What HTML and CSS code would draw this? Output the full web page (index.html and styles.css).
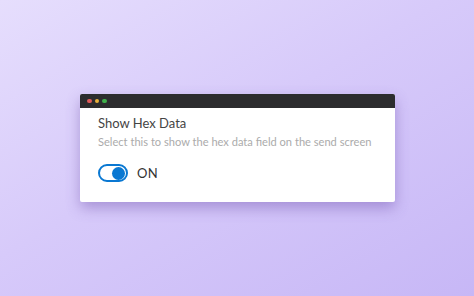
FILE: index.html
```html
<!DOCTYPE html>
<html>
<head>
<meta charset="utf-8">
<link rel="stylesheet" href="styles.css">
</head>
<body>
<div class="stage">
  <div class="window">
    <div class="titlebar">
      <span class="dot red"></span>
      <span class="dot yellow"></span>
      <span class="dot green"></span>
    </div>
    <div class="content">
      <div class="title">Show Hex Data</div>
      <div class="desc">Select this to show the hex data field on the send screen</div>
      <div class="toggle-row">
        <div class="toggle"><span class="knob"></span></div>
        <span class="state">ON</span>
      </div>
    </div>
  </div>
</div>
</body>
</html>
```
FILE: styles.css
```css
html, body {
  margin: 0;
  padding: 0;
  width: 474px;
  height: 296px;
  overflow: hidden;
}
.stage {
  width: 474px;
  height: 296px;
  background: linear-gradient(150deg, #e6defd 0%, #d7cafa 45%, #c7b7f6 100%);
  padding-top: 94px;
  padding-left: 80px;
  box-sizing: border-box;
  font-family: Lato, "Noto Sans", sans-serif;
}
.window {
  width: 315px;
  height: 108px;
  background: #fff;
  border-radius: 2px;
  overflow: hidden;
  box-shadow: 0 6px 14px rgba(110, 80, 170, 0.45);
}
.titlebar {
  height: 14px;
  background: #2c2c2e;
  display: flex;
  align-items: center;
  padding-left: 7px;
  gap: 3px;
}
.dot {
  width: 4.5px;
  height: 4.5px;
  border-radius: 50%;
}
.red { background: #e05a5a; }
.yellow { background: #e9b23b; }
.green { background: #3fb04a; }
.content {
  padding-left: 18px;
  padding-top: 6px;
}
.title {
  font-size: 13px;
  color: #444;
  line-height: 18px;
  height: 18px;
}
.desc {
  font-size: 11.1px;
  color: #ababab;
  line-height: 15px;
  margin-top: 2px;
}
.toggle-row {
  display: flex;
  align-items: center;
  margin-top: 15px;
}
.toggle {
  width: 30px;
  height: 18px;
  box-sizing: border-box;
  border: 2px solid #0a78d2;
  border-radius: 9px;
  display: flex;
  align-items: center;
  justify-content: flex-end;
  padding-right: 1px;
}
.knob {
  width: 13px;
  height: 13px;
  background: #0a78d2;
  border-radius: 50%;
}
.state {
  margin-left: 9px;
  font-size: 13px;
  color: #333;
  letter-spacing: 0.3px;
}
```
